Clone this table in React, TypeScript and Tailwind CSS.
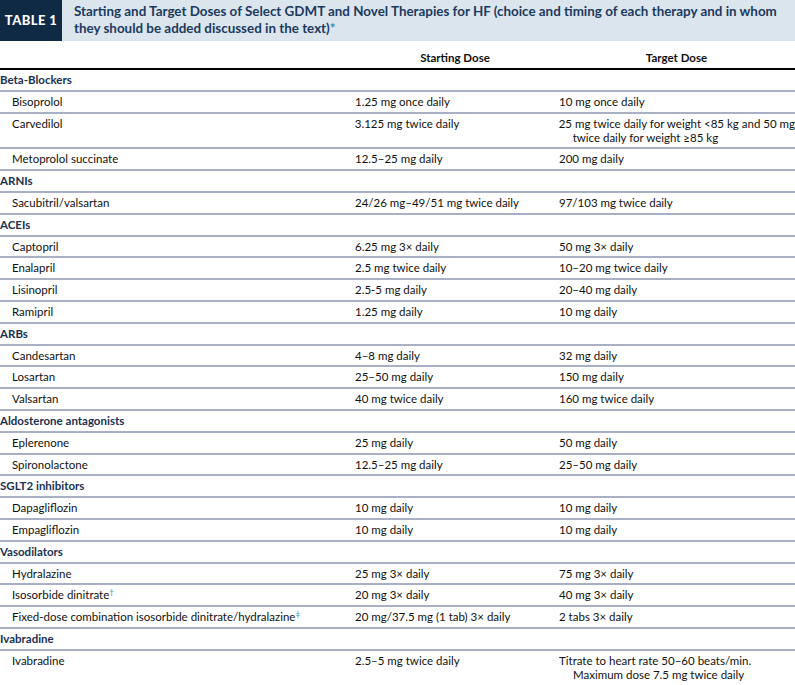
import React from 'react';

type Row =
  | { kind: 'cat'; name: string }
  | { kind: 'drug'; name: React.ReactNode; start: React.ReactNode; target: React.ReactNode };

const dagger = <span className="relative -top-[4px] text-[#2f8fb8] text-[8px] leading-none">†</span>;
const ddagger = <span className="relative -top-[4px] text-[#2f8fb8] text-[8px] leading-none">‡</span>;

const rows: Row[] = [
  { kind: 'cat', name: 'Beta-Blockers' },
  { kind: 'drug', name: 'Bisoprolol', start: '1.25 mg once daily', target: '10 mg once daily' },
  {
    kind: 'drug',
    name: 'Carvedilol',
    start: '3.125 mg twice daily',
    target: (
      <>
        <div>25 mg twice daily for weight &lt;85 kg and 50 mg</div>
        <div className="pl-[14px]">twice daily for weight ≥85 kg</div>
      </>
    ),
  },
  { kind: 'drug', name: 'Metoprolol succinate', start: '12.5–25 mg daily', target: '200 mg daily' },
  { kind: 'cat', name: 'ARNIs' },
  { kind: 'drug', name: 'Sacubitril/valsartan', start: '24/26 mg–49/51 mg twice daily', target: '97/103 mg twice daily' },
  { kind: 'cat', name: 'ACEIs' },
  { kind: 'drug', name: 'Captopril', start: '6.25 mg 3× daily', target: '50 mg 3× daily' },
  { kind: 'drug', name: 'Enalapril', start: '2.5 mg twice daily', target: '10–20 mg twice daily' },
  { kind: 'drug', name: 'Lisinopril', start: '2.5-5 mg daily', target: '20–40 mg daily' },
  { kind: 'drug', name: 'Ramipril', start: '1.25 mg daily', target: '10 mg daily' },
  { kind: 'cat', name: 'ARBs' },
  { kind: 'drug', name: 'Candesartan', start: '4–8 mg daily', target: '32 mg daily' },
  { kind: 'drug', name: 'Losartan', start: '25–50 mg daily', target: '150 mg daily' },
  { kind: 'drug', name: 'Valsartan', start: '40 mg twice daily', target: '160 mg twice daily' },
  { kind: 'cat', name: 'Aldosterone antagonists' },
  { kind: 'drug', name: 'Eplerenone', start: '25 mg daily', target: '50 mg daily' },
  { kind: 'drug', name: 'Spironolactone', start: '12.5–25 mg daily', target: '25–50 mg daily' },
  { kind: 'cat', name: 'SGLT2 inhibitors' },
  { kind: 'drug', name: 'Dapagliflozin', start: '10 mg daily', target: '10 mg daily' },
  { kind: 'drug', name: 'Empagliflozin', start: '10 mg daily', target: '10 mg daily' },
  { kind: 'cat', name: 'Vasodilators' },
  { kind: 'drug', name: 'Hydralazine', start: '25 mg 3× daily', target: '75 mg 3× daily' },
  { kind: 'drug', name: <>Isosorbide dinitrate{dagger}</>, start: '20 mg 3× daily', target: '40 mg 3× daily' },
  {
    kind: 'drug',
    name: <>Fixed-dose combination isosorbide dinitrate/hydralazine{ddagger}</>,
    start: '20 mg/37.5 mg (1 tab) 3× daily',
    target: '2 tabs 3× daily',
  },
  { kind: 'cat', name: 'Ivabradine' },
  {
    kind: 'drug',
    name: 'Ivabradine',
    start: '2.5–5 mg twice daily',
    target: (
      <>
        <div>Titrate to heart rate 50–60 beats/min.</div>
        <div className="pl-[14px]">Maximum dose 7.5 mg twice daily</div>
      </>
    ),
  },
];

export default function App() {
  return (
    <div
      className="w-[795px] h-[685px] bg-white text-[#111] overflow-hidden"
      style={{ fontFamily: 'Lato, "Noto Sans", sans-serif' }}
    >
      {/* Title band */}
      <div className="flex h-[41px] bg-[#dbe5ed]">
        <div className="w-[62px] bg-[#0f2a45] text-white font-black text-[13px] tracking-[0.4px] flex items-center justify-center">
          TABLE 1
        </div>
        <div className="flex-1 pl-[12px] pt-[3px] text-[#1c3a5e] font-bold text-[13.4px] leading-[17px] whitespace-nowrap">
          Starting and Target Doses of Select GDMT and Novel Therapies for HF (choice and timing of each therapy and in whom
          <br />
          they should be added discussed in the text)<span className="text-[#2f8fb8]">*</span>
        </div>
      </div>

      {/* Column header */}
      <div className="flex mt-[10px] border-b-2 border-black text-[11.5px] font-bold leading-[14px] pb-[3px]">
        <div className="w-[352px]" />
        <div className="w-[206px] text-center">Starting Dose</div>
        <div className="flex-1 text-center">Target Dose</div>
      </div>

      {/* Body */}
      <div className="text-[11.5px] leading-[14px] whitespace-nowrap">
        {rows.map((r, i) => {
          const last = i === rows.length - 1;
          const border = last ? 'border-black' : 'border-[#a9b0c5]';
          if (r.kind === 'cat') {
            return (
              <div key={i} className={`border-b-2 ${border} pt-[3px] pb-[2.8px] font-bold text-[#1a3152]`}>
                {r.name}
              </div>
            );
          }
          return (
            <div key={i} className={`flex border-b-2 ${border} pt-[3px] pb-[2.8px]`}>
              <div className="w-[352px] pl-[12px]">{r.name}</div>
              <div className="w-[206px] pl-[3px]">{r.start}</div>
              <div className="flex-1 pl-[1px]">{r.target}</div>
            </div>
          );
        })}
      </div>
    </div>
  );
}
